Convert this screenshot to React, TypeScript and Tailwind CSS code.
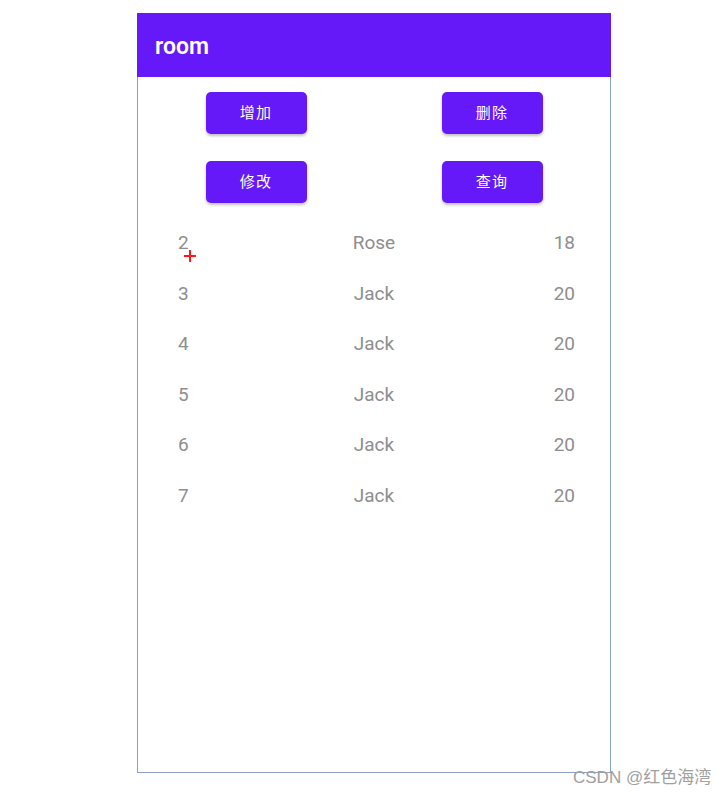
import React from 'react'

const rows = [
  { id: 2, name: 'Rose', age: 18 },
  { id: 3, name: 'Jack', age: 20 },
  { id: 4, name: 'Jack', age: 20 },
  { id: 5, name: 'Jack', age: 20 },
  { id: 6, name: 'Jack', age: 20 },
  { id: 7, name: 'Jack', age: 20 },
]

const cjk = { fontFamily: 'Roboto, "Noto Sans CJK SC", sans-serif' }

function Btn({ label }: { label: string }) {
  return (
    <button
      className="w-[101px] h-[42px] rounded-[5px] bg-[#6519f8] text-white text-[15px] tracking-[0.08em] shadow-[0_2px_3px_rgba(0,0,0,0.25)]"
      style={cjk}
    >
      {label}
    </button>
  )
}

export default function App() {
  return (
    <div className="relative w-[726px] h-[796px] bg-white pt-[13px] pl-[137px]" style={cjk}>
      <div className="w-[474px] h-[760px] border border-[#8c9fc4] bg-white flex flex-col">
        {/* app bar */}
        <div className="h-[64px] -mx-px -mt-px bg-[#6519f8] flex items-center pl-[18px] pt-[4px]">
          <span className="text-white text-[23px] font-semibold">room</span>
        </div>

        {/* action buttons */}
        <div className="grid grid-cols-2 gap-y-[27px] mt-[15px]">
          <div className="flex justify-center"><Btn label="增加" /></div>
          <div className="flex justify-center"><Btn label="删除" /></div>
          <div className="flex justify-center"><Btn label="修改" /></div>
          <div className="flex justify-center"><Btn label="查询" /></div>
        </div>

        {/* list */}
        <div className="mt-[15px] px-[40px]">
          {rows.map((r) => (
            <div key={r.id} className="relative grid grid-cols-3 items-center h-[50.5px] text-[19px] text-[#8e8e8e]">
              <span>{r.id}</span>
              <span className="text-center">{r.name}</span>
              <span className="text-right -mr-[5px]">{r.age}</span>
              {r.id === 2 && (
                <span className="absolute left-[6px] top-[32px] w-[12px] h-[12px]">
                  <span className="absolute left-0 top-[5px] w-[12px] h-[2px] bg-[#ff1a1a]" />
                  <span className="absolute left-[5px] top-0 w-[2px] h-[12px] bg-[#ff1a1a]" />
                </span>
              )}
            </div>
          ))}
        </div>
      </div>

      <span
        className="absolute left-[573px] top-[765px] text-[17px] text-[#a0a0a0]"
        style={{ fontFamily: '"Liberation Sans", "Noto Sans CJK SC", sans-serif' }}
      >
        CSDN @红色海湾
      </span>
    </div>
  )
}
